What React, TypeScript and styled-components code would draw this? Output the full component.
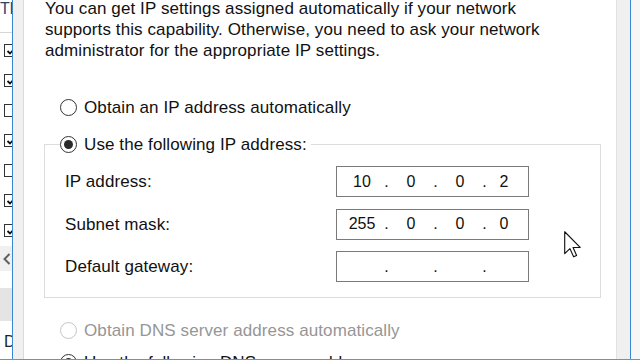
import styled, { createGlobalStyle } from 'styled-components'

const GlobalStyle = createGlobalStyle`
  html, body {
    margin: 0;
    padding: 0;
    background: #fff;
  }
  body {
    font-family: 'Liberation Sans', Arial, sans-serif;
    color: #111;
  }
`

const ipRows = [
  { label: 'IP address:', parts: ['10', '0', '0', '2'] },
  { label: 'Subnet mask:', parts: ['255', '0', '0', '0'] },
  { label: 'Default gateway:', parts: ['', '', '', ''] },
]

const backChecks = [true, true, false, true, false, true, true]

function Radio({ checked, disabled }: { checked?: boolean; disabled?: boolean }) {
  return <Circle $disabled={disabled}>{checked && <Dot />}</Circle>
}

function IpField({ parts }: { parts: string[] }) {
  return (
    <IpBox>
      {parts.map((p, i) => (
        <>
          <IpPart key={'p' + i}>{p}</IpPart>
          {i < 3 && <IpDot key={'d' + i}>.</IpDot>}
        </>
      ))}
    </IpBox>
  )
}

export default function App() {
  return (
    <>
      <GlobalStyle />
      <Screen>
        <Main>
          <BackWindow>
            <BackTitle>Th</BackTitle>
            <CheckList>
              {backChecks.map((c, i) => (
                <CheckBox key={i}>
                  {c && (
                    <svg width="10" height="10" viewBox="0 0 10 10">
                      <path d="M1.5 5 L4 7.5 L8.5 2.5" fill="none" stroke="#111" strokeWidth="1.8" />
                    </svg>
                  )}
                </CheckBox>
              ))}
            </CheckList>
            <ScrollArrow>
              <svg width="8" height="12" viewBox="0 0 8 12">
                <path d="M6.5 1 L1.5 6 L6.5 11" fill="none" stroke="#606060" strokeWidth="2" />
              </svg>
            </ScrollArrow>
            <GreyBlock />
            <BackLabel>D</BackLabel>
          </BackWindow>
          <BlueEdge />
          <Frame $w={10} />
          <TabPage>
            <Intro>
              You can get IP settings assigned automatically if your network
              <br />
              supports this capability. Otherwise, you need to ask your network
              <br />
              administrator for the appropriate IP settings.
            </Intro>
            <RadioRow $indent $top={36}>
              <Radio />
              Obtain an IP address automatically
            </RadioRow>
            <Group>
              <Legend>
                <RadioRow>
                  <Radio checked />
                  Use the following IP address:
                </RadioRow>
              </Legend>
              <Fields>
                {ipRows.map((r) => (
                  <>
                    <FieldLabel key={r.label}>{r.label}</FieldLabel>
                    <IpField key={r.label + '-f'} parts={r.parts} />
                  </>
                ))}
              </Fields>
            </Group>
            <RadioRow $indent $top={22} $disabled>
              <Radio disabled />
              Obtain DNS server address automatically
            </RadioRow>
            <RadioRow $indent $top={11}>
              <Radio checked />
              Use the following DNS server addresses:
            </RadioRow>
          </TabPage>
          <Frame $w={13} />
          <BlueEdge />
          <BackRight />
        </Main>
        <BottomEdge />
        <Pointer>
          <svg width="17" height="27" viewBox="0 0 12 19">
            <path
              d="M0.5 0.5 L0.5 16 L4.2 12.4 L6.8 18.2 L8.9 17.3 L6.4 11.6 L11.4 11.6 Z"
              fill="#fff"
              stroke="#111"
              strokeWidth="0.8"
              strokeLinejoin="round"
            />
          </svg>
        </Pointer>
      </Screen>
    </>
  )
}

const Screen = styled.div`
  position: relative;
  width: 640px;
  height: 360px;
  overflow: hidden;
  display: flex;
  flex-direction: column;
  background: #fff;
`

const Main = styled.div`
  display: flex;
  height: 359px;
  overflow: hidden;
`

const BottomEdge = styled.div`
  height: 1px;
  background: #8c8c8c;
`

const BackWindow = styled.div`
  width: 12px;
  flex: none;
  overflow: hidden;
  display: flex;
  flex-direction: column;
  background: #fff;
`

const BackTitle = styled.div`
  height: 32px;
  border-bottom: 1px solid #d6d6d6;
  font-size: 16px;
  line-height: 17px;
  color: #27466e;
  white-space: nowrap;
`

const CheckList = styled.div`
  display: flex;
  flex-direction: column;
  gap: 17px;
  padding: 11px 0 0 4px;
`

const CheckBox = styled.div`
  width: 11px;
  height: 11px;
  flex: none;
  border: 1px solid #333;
  display: grid;
  place-items: center;
  background: #fff;
`

const ScrollArrow = styled.div`
  margin-top: 9px;
  height: 25px;
  background: #f0f0f0;
  display: flex;
  align-items: center;
  padding-left: 3px;
`

const GreyBlock = styled.div`
  margin-top: 17px;
  height: 33px;
  background: #e4e4e4;
`

const BackLabel = styled.div`
  margin-top: 12px;
  padding-left: 4px;
  font-size: 16px;
  line-height: 18px;
  color: #222;
`

const BlueEdge = styled.div`
  width: 1px;
  flex: none;
  background: #3a88d4;
`

const Frame = styled.div<{ $w: number }>`
  width: ${({ $w }) => $w}px;
  flex: none;
  background: #f0f0f0;
`

const BackRight = styled.div`
  width: 9px;
  flex: none;
  background: #f6f6f6;
`

const TabPage = styled.div`
  width: 594px;
  flex: none;
  box-sizing: border-box;
  border-left: 1px solid #dadada;
  border-right: 1px solid #e2e2e2;
  background: #fff;
  padding-left: 20px;
  display: flex;
  flex-direction: column;
  align-items: flex-start;
  font-size: 17px;
  letter-spacing: 0.1px;
`

const Intro = styled.p`
  margin: -2px 0 0 1px;
  line-height: 21px;
  white-space: nowrap;
`

const RadioRow = styled.div<{ $indent?: boolean; $top?: number; $disabled?: boolean }>`
  display: flex;
  align-items: center;
  gap: 7px;
  height: 21px;
  line-height: 21px;
  white-space: nowrap;
  margin-left: ${({ $indent }) => ($indent ? '16px' : '0')};
  margin-top: ${({ $top }) => $top ?? 0}px;
  color: ${({ $disabled }) => ($disabled ? '#969696' : '#111')};
`

const Circle = styled.span<{ $disabled?: boolean }>`
  width: 17px;
  height: 17px;
  flex: none;
  box-sizing: border-box;
  border-radius: 50%;
  border: 1px solid ${({ $disabled }) => ($disabled ? '#c4c4c4' : '#333')};
  background: #fff;
  display: grid;
  place-items: center;
`

const Dot = styled.span`
  width: 9px;
  height: 9px;
  border-radius: 50%;
  background: #2a2a2a;
`

const Group = styled.fieldset`
  width: 557px;
  box-sizing: border-box;
  margin: 16px 0 0 0;
  padding: 0 0 15px 20px;
  border: 1px solid #dcdcdc;
  min-inline-size: auto;
`

const Legend = styled.legend`
  padding: 0 4px 0 0;
  margin-left: -5px;
`

const Fields = styled.div`
  display: grid;
  grid-template-columns: 271px 193px;
  row-gap: 11.5px;
  align-items: center;
  margin-top: 11px;
`

const FieldLabel = styled.div`
  line-height: 21px;
`

const IpBox = styled.div`
  height: 31px;
  box-sizing: border-box;
  border: 1px solid #7a7a7a;
  display: grid;
  grid-template-columns: 40px 9px 40px 9px 40px 9px 30px;
  align-items: center;
  padding-left: 5px;
  background: #fff;
  font-size: 16px;
  letter-spacing: 0;
`

const IpPart = styled.span`
  text-align: center;
`

const IpDot = styled.span`
  text-align: center;
`

const Pointer = styled.div`
  position: absolute;
  left: 564px;
  top: 231px;
  line-height: 0;
`
